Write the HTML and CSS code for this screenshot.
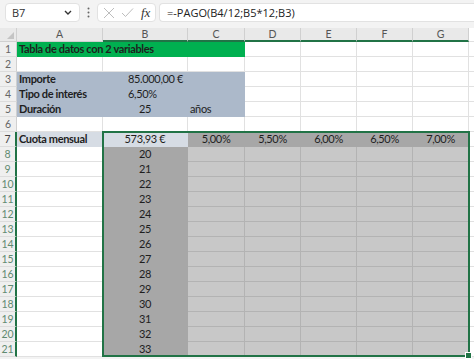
FILE: index.html
```html
<!DOCTYPE html>
<html lang="es">
<head>
  <meta charset="UTF-8">
  <title>Tabla de datos con 2 variables</title>
  <link rel="stylesheet" href="styles.css">
</head>
<body>
  <div class="toolbar">
    <div class="namebox">
      <span>B7</span>
      <svg class="chevron" width="8" height="5" viewBox="0 0 8 5"><path d="M1 1 L4 4 L7 1" fill="none" stroke="#333" stroke-width="1.4"/></svg>
    </div>
    <svg class="dots" width="3" height="11" viewBox="0 0 3 11"><circle cx="1.5" cy="1.5" r="1" fill="#666"/><circle cx="1.5" cy="5.5" r="1" fill="#666"/><circle cx="1.5" cy="9.5" r="1" fill="#666"/></svg>
    <div class="fxbox">
      <svg width="12" height="12" viewBox="0 0 12 12"><path d="M1 1 L11 11 M11 1 L1 11" stroke="#bdbdbd" stroke-width="1"/></svg>
      <svg width="13" height="11" viewBox="0 0 13 11"><path d="M1 6 L4.5 9.5 L12 1.5" fill="none" stroke="#bdbdbd" stroke-width="1"/></svg>
      <span class="fx">fx</span>
    </div>
    <div class="formula">=-PAGO(B4/12;B5*12;B3)</div>
  </div>

  <div class="sheet">
    <div class="grid">
      <!-- cabecera -->
      <div class="corner"></div>
      <div class="colhead">A</div>
      <div class="colhead sel">B</div>
      <div class="colhead sel">C</div>
      <div class="colhead sel">D</div>
      <div class="colhead sel">E</div>
      <div class="colhead sel">F</div>
      <div class="colhead sel">G</div>
      <div class="colhead rest"></div>

      <!-- 1 -->
      <div class="rowhead">1</div>
      <div class="cell green bold span3">Tabla de datos con 2 variables</div>
      <div class="cell"></div><div class="cell"></div><div class="cell"></div><div class="cell"></div><div class="cell rest"></div>

      <!-- 2 -->
      <div class="rowhead">2</div>
      <div class="cell"></div><div class="cell"></div><div class="cell"></div><div class="cell"></div><div class="cell"></div><div class="cell"></div><div class="cell"></div><div class="cell rest"></div>

      <!-- 3 -->
      <div class="rowhead">3</div>
      <div class="cell slate bold">Importe</div>
      <div class="cell slate indent">85.000,00 €</div>
      <div class="cell slate"></div>
      <div class="cell"></div><div class="cell"></div><div class="cell"></div><div class="cell"></div><div class="cell rest"></div>

      <!-- 4 -->
      <div class="rowhead">4</div>
      <div class="cell slate bold">Tipo de interés</div>
      <div class="cell slate indent">6,50%</div>
      <div class="cell slate"></div>
      <div class="cell"></div><div class="cell"></div><div class="cell"></div><div class="cell"></div><div class="cell rest"></div>

      <!-- 5 -->
      <div class="rowhead">5</div>
      <div class="cell slate bold">Duración</div>
      <div class="cell slate center">25</div>
      <div class="cell slate">años</div>
      <div class="cell"></div><div class="cell"></div><div class="cell"></div><div class="cell"></div><div class="cell rest"></div>

      <!-- 6 -->
      <div class="rowhead">6</div>
      <div class="cell"></div><div class="cell"></div><div class="cell"></div><div class="cell"></div><div class="cell"></div><div class="cell"></div><div class="cell"></div><div class="cell rest"></div>

      <!-- 7 -->
      <div class="rowhead selrow first">7</div>
      <div class="cell pale bold">Cuota mensual</div>
      <div class="cell pale center">573,93 €</div>
      <div class="cell rate">5,00%</div>
      <div class="cell rate">5,50%</div>
      <div class="cell rate">6,00%</div>
      <div class="cell rate">6,50%</div>
      <div class="cell rate">7,00%</div>
      <div class="cell rest"></div>

      <div class="rowhead selrow">8</div><div class="cell"></div><div class="cell term">20</div><div class="cell out"></div><div class="cell out"></div><div class="cell out"></div><div class="cell out"></div><div class="cell out"></div><div class="cell rest"></div>
      <div class="rowhead selrow">9</div><div class="cell"></div><div class="cell term">21</div><div class="cell out"></div><div class="cell out"></div><div class="cell out"></div><div class="cell out"></div><div class="cell out"></div><div class="cell rest"></div>
      <div class="rowhead selrow">10</div><div class="cell"></div><div class="cell term">22</div><div class="cell out"></div><div class="cell out"></div><div class="cell out"></div><div class="cell out"></div><div class="cell out"></div><div class="cell rest"></div>
      <div class="rowhead selrow">11</div><div class="cell"></div><div class="cell term">23</div><div class="cell out"></div><div class="cell out"></div><div class="cell out"></div><div class="cell out"></div><div class="cell out"></div><div class="cell rest"></div>
      <div class="rowhead selrow">12</div><div class="cell"></div><div class="cell term">24</div><div class="cell out"></div><div class="cell out"></div><div class="cell out"></div><div class="cell out"></div><div class="cell out"></div><div class="cell rest"></div>
      <div class="rowhead selrow">13</div><div class="cell"></div><div class="cell term">25</div><div class="cell out"></div><div class="cell out"></div><div class="cell out"></div><div class="cell out"></div><div class="cell out"></div><div class="cell rest"></div>
      <div class="rowhead selrow">14</div><div class="cell"></div><div class="cell term">26</div><div class="cell out"></div><div class="cell out"></div><div class="cell out"></div><div class="cell out"></div><div class="cell out"></div><div class="cell rest"></div>
      <div class="rowhead selrow">15</div><div class="cell"></div><div class="cell term">27</div><div class="cell out"></div><div class="cell out"></div><div class="cell out"></div><div class="cell out"></div><div class="cell out"></div><div class="cell rest"></div>
      <div class="rowhead selrow">16</div><div class="cell"></div><div class="cell term">28</div><div class="cell out"></div><div class="cell out"></div><div class="cell out"></div><div class="cell out"></div><div class="cell out"></div><div class="cell rest"></div>
      <div class="rowhead selrow">17</div><div class="cell"></div><div class="cell term">29</div><div class="cell out"></div><div class="cell out"></div><div class="cell out"></div><div class="cell out"></div><div class="cell out"></div><div class="cell rest"></div>
      <div class="rowhead selrow">18</div><div class="cell"></div><div class="cell term">30</div><div class="cell out"></div><div class="cell out"></div><div class="cell out"></div><div class="cell out"></div><div class="cell out"></div><div class="cell rest"></div>
      <div class="rowhead selrow">19</div><div class="cell"></div><div class="cell term">31</div><div class="cell out"></div><div class="cell out"></div><div class="cell out"></div><div class="cell out"></div><div class="cell out"></div><div class="cell rest"></div>
      <div class="rowhead selrow">20</div><div class="cell"></div><div class="cell term">32</div><div class="cell out"></div><div class="cell out"></div><div class="cell out"></div><div class="cell out"></div><div class="cell out"></div><div class="cell rest"></div>
      <div class="rowhead selrow">21</div><div class="cell"></div><div class="cell term">33</div><div class="cell out"></div><div class="cell out"></div><div class="cell out"></div><div class="cell out"></div><div class="cell out"></div><div class="cell rest"></div>
    </div>

    <!-- rango seleccionado B7:G21 -->
    <div class="selection"><span class="handle"></span></div>
  </div>
</body>
</html>
```

FILE: styles.css
```css
body {
  margin: 0;
  width: 474px;
  height: 359px;
  overflow: hidden;
  background: #f3f3f3;
  font-family: "Lato", "Liberation Sans", sans-serif;
  color: #1e1e1e;
}

/* barra de fórmulas */
.toolbar {
  display: flex;
  align-items: center;
  height: 19px;
  padding: 3px 0 6px 5px;
  font-family: "Open Sans", "Liberation Sans", sans-serif;
}

.namebox {
  display: flex;
  align-items: center;
  justify-content: space-between;
  width: 75px;
  height: 19px;
  padding: 0 6px;
  box-sizing: border-box;
  background: #fff;
  border: 1px solid #e2e2e2;
  border-radius: 4px;
  font-size: 11px;
  color: #333;
}

.chevron {
  margin-right: 1px;
}

.dots {
  margin: 0 7px 0 7px;
}

.fxbox {
  display: flex;
  align-items: center;
  gap: 6px;
  width: 59px;
  height: 19px;
  padding-left: 5px;
  box-sizing: border-box;
  background: #fff;
  border: 1px solid #e2e2e2;
  border-radius: 4px;
}

.fx {
  font-family: "Liberation Serif", serif;
  font-style: italic;
  font-size: 13px;
  color: #333;
  margin-left: 1px;
}

.formula {
  flex: 1;
  height: 19px;
  margin-left: 3px;
  padding-left: 7px;
  box-sizing: border-box;
  background: #fff;
  border-top: 1px solid #e2e2e2;
  border-bottom: 1px solid #e2e2e2;
  border-left: 1px solid #e2e2e2;
  border-radius: 4px 0 0 4px;
  font-size: 11px;
  line-height: 17px;
  color: #222;
}

/* hoja */
.sheet {
  position: relative;
  background: #fff;
}

.grid {
  display: grid;
  grid-template-columns: 17px 86px 85px 57px 56px 56px 56px 56px 1fr;
  grid-template-rows: 14px;
  grid-auto-rows: 15px;
  font-size: 11px;
  letter-spacing: -0.35px;
}

.corner {
  background: #e9e9e9;
  border-right: 1px solid #d0d0d0;
  border-bottom: 1px solid #d0d0d0;
  box-sizing: border-box;
  position: relative;
}

.corner::after {
  content: "";
  position: absolute;
  right: 2px;
  bottom: 2px;
  border-left: 7px solid transparent;
  border-bottom: 7px solid #c4c4c4;
}

.colhead {
  background: #e9e9e9;
  border-right: 1px solid #d0d0d0;
  border-bottom: 1px solid #d0d0d0;
  box-sizing: border-box;
  text-align: center;
  font-size: 10.5px;
  line-height: 13px;
  letter-spacing: 0;
  color: #555;
}

.colhead.sel {
  border-bottom: 2px solid #217346;
}

.colhead.rest {
  background: #fff;
  border: none;
  border-bottom: 1px solid #e0e0e0;
}

.rowhead {
  background: #efefef;
  border-right: 1px solid #d0d0d0;
  border-bottom: 1px solid #dcdcdc;
  box-sizing: border-box;
  text-align: center;
  font-size: 10.5px;
  line-height: 14px;
  letter-spacing: 0;
  color: #666;
}

.rowhead.selrow {
  border-right: 2px solid #217346;
  color: #5f8a70;
}

.rowhead.first {
  color: #444;
}

.cell {
  border-right: 1px solid #e1e1e1;
  border-bottom: 1px solid #e1e1e1;
  box-sizing: border-box;
  padding: 0 2px;
  line-height: 14px;
  white-space: nowrap;
  overflow: visible;
}

.cell.rest {
  border-right: none;
}

.bold {
  font-weight: bold;
}

.center {
  text-align: center;
}

.indent {
  padding-left: 25px;
}

.green {
  background: #00b050;
  border-color: #00b050;
}

.span3 {
  grid-column: span 3;
}

.slate {
  background: #acb9ca;
  border-color: #acb9ca;
}

.pale {
  background: #d6dce4;
  border-color: #d6dce4;
}

.rate {
  background: #a7a7a7;
  border-color: #a7a7a7;
  text-align: center;
}

.term {
  background: #a7a7a7;
  border-color: #a7a7a7;
  text-align: center;
}

.out {
  background: #c8c8c8;
  border-color: #b3b3b3;
}

.selection {
  position: absolute;
  left: 102px;
  top: 103px;
  width: 368px;
  height: 226px;
  border: 2px solid #217346;
  box-sizing: border-box;
  pointer-events: none;
}

.handle {
  position: absolute;
  right: -4px;
  bottom: -4px;
  width: 5px;
  height: 5px;
  background: #217346;
  border: 1px solid #fff;
}
```
